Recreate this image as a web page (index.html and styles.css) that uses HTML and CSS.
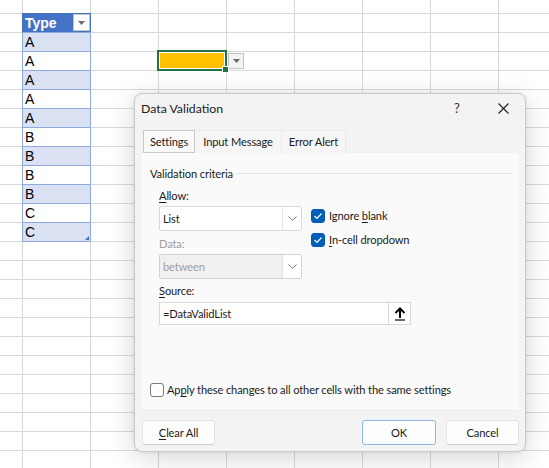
FILE: index.html
```html
<!DOCTYPE html>
<html>
<head>
<meta charset="utf-8">
<link rel="stylesheet" href="styles.css">
</head>
<body>
<div class="sheet">
  <div class="tcell thead" style="grid-row:2">Type<span class="fbtn"><svg width="7" height="4" viewBox="0 0 7 4"><path d="M0 0H7L3.5 4Z" fill="#6b6b6b"/></svg></span></div>
  <div class="tcell band" style="grid-row:3">A</div>
  <div class="tcell" style="grid-row:4">A</div>
  <div class="tcell band" style="grid-row:5">A</div>
  <div class="tcell" style="grid-row:6">A</div>
  <div class="tcell band" style="grid-row:7">A</div>
  <div class="tcell" style="grid-row:8">B</div>
  <div class="tcell band" style="grid-row:9">B</div>
  <div class="tcell" style="grid-row:10">B</div>
  <div class="tcell band" style="grid-row:11">B</div>
  <div class="tcell" style="grid-row:12">C</div>
  <div class="tcell band last" style="grid-row:13">C<span class="resize"></span></div>

  <div class="selcell"><span class="handle"></span></div>
  <div class="cellbtn"><svg width="7" height="4" viewBox="0 0 7 4"><path d="M0 0H7L3.5 4Z" fill="#6b6b6b"/></svg></div>
</div>

<div class="dialog">
  <div class="titlebar">
    <span class="title">Data Validation</span>
    <span class="help">?</span>
    <span class="close"><svg width="11" height="11" viewBox="0 0 11 11"><path d="M0.5 0.5L10.5 10.5M10.5 0.5L0.5 10.5" stroke="#1f1f1f" stroke-width="1.1"/></svg></span>
  </div>
  <div class="tabs">
    <div class="tab active">Settings</div>
    <div class="tab">Input Message</div>
    <div class="tab">Error Alert</div>
  </div>
  <div class="panel">
    <div class="group">
      <span>Validation criteria</span><span class="gline"></span>
    </div>
    <div class="criteria">
      <div class="lbl"><u>A</u>llow:</div>
      <div class="combo"><span class="ctext">List</span><span class="chev"><svg width="9" height="5" viewBox="0 0 9 5"><path d="M0.5 0.5L4.5 4.5L8.5 0.5" fill="none" stroke="#777" stroke-width="1"/></svg></span></div>
      <div class="checks">
        <div class="chk"><span class="box on"><svg width="10" height="8" viewBox="0 0 10 8"><path d="M1.5 4L4 6.5L8.5 1.5" fill="none" stroke="#fff" stroke-width="1.2"/></svg></span><span>Ignore <u>b</u>lank</span></div>
        <div class="chk"><span class="box on"><svg width="10" height="8" viewBox="0 0 10 8"><path d="M1.5 4L4 6.5L8.5 1.5" fill="none" stroke="#fff" stroke-width="1.2"/></svg></span><span><u>I</u>n-cell dropdown</span></div>
      </div>
      <div class="lbl dis lbl-data"><span>Data:</span></div>
      <div class="combo disabled"><span class="ctext">between</span><span class="chev"><svg width="9" height="5" viewBox="0 0 9 5"><path d="M0.5 0.5L4.5 4.5L8.5 0.5" fill="none" stroke="#777" stroke-width="1"/></svg></span></div>
      <div class="lbl wide lbl-src"><u>S</u>ource:</div>
      <div class="source wide"><span class="ctext">=DataValidList</span><span class="upbtn"><svg width="12" height="14" viewBox="0 0 12 14"><path d="M6 1.5V11" stroke="#000" stroke-width="2"/><path d="M1.5 6L6 1.5L10.5 6" fill="none" stroke="#000" stroke-width="2"/><path d="M1 13H11" stroke="#000" stroke-width="1.2"/></svg></span></div>
    </div>
    <div class="apply"><span class="box"></span><span>Ap<u>p</u>ly these changes to all other cells with the same settings</span></div>
  </div>
  <div class="buttons">
    <div class="btn"><u>C</u>lear All</div>
    <div class="spacer"></div>
    <div class="btn primary">OK</div>
    <div class="btn">Cancel</div>
  </div>
</div>
</body>
</html>
```

FILE: styles.css
```css
html, body {
  margin: 0;
  padding: 0;
  width: 549px;
  height: 468px;
  overflow: hidden;
  background: #fff;
}

body {
  position: relative;
  font-family: "Lato", "Noto Sans", sans-serif;
}

.sheet {
  width: 549px;
  height: 468px;
  display: grid;
  grid-template-columns: 22px repeat(8, 68px);
  grid-template-rows: 13px repeat(24, 19px);
  background-color: #fff;
  background-image:
    linear-gradient(to right, #d9d9d9 1px, transparent 1px),
    linear-gradient(to bottom, #d9d9d9 1px, transparent 1px);
  background-size: 68px 100%, 100% 19px;
  background-position: 22px 0, 0 13px;
  font-family: "Liberation Sans", Arial, sans-serif;
  font-size: 14px;
  color: #000;
}

.tcell {
  grid-column: 2;
  position: relative;
  box-sizing: border-box;
  width: 69px;
  height: 20px;
  border: 1px solid #8ea9db;
  border-bottom: none;
  background: #fff;
  padding-left: 2px;
  line-height: 19px;
}

.tcell.band { background: #d9e1f2; }
.tcell.last { border-bottom: 1px solid #8ea9db; }

.thead {
  background: #4472c4;
  border-color: #4472c4;
  color: #fff;
  font-weight: bold;
}

.fbtn {
  position: absolute;
  right: 0;
  top: 0;
  width: 17px;
  height: 17px;
  box-sizing: border-box;
  background: #fff;
  border: 1px solid #c6c6c6;
  display: flex;
  align-items: center;
  justify-content: center;
}

.resize {
  position: absolute;
  right: 1px;
  bottom: 1px;
  width: 0;
  height: 0;
  border-left: 4px solid transparent;
  border-bottom: 4px solid #4472c4;
}

.selcell {
  grid-column: 4;
  grid-row: 4;
  position: relative;
  margin: -1px -1px -1px -1px;
  border: 2px solid #217346;
  background: #ffc000;
  box-shadow: inset 0 0 0 1px #fff;
}

.handle {
  position: absolute;
  right: -4px;
  bottom: -4px;
  width: 5px;
  height: 5px;
  background: #217346;
  border: 1px solid #fff;
}

.cellbtn {
  grid-column: 5;
  grid-row: 4;
  justify-self: start;
  align-self: start;
  margin-top: 2px;
  margin-left: 2px;
  width: 16px;
  height: 16px;
  box-sizing: border-box;
  background: #f3f3f3;
  border: 1px solid #c3c3c3;
  display: flex;
  align-items: center;
  justify-content: center;
}

/* Dialog */
.dialog {
  position: absolute;
  left: 134px;
  top: 93px;
  width: 392px;
  height: 359px;
  box-sizing: border-box;
  border: 1px solid #c9c9c9;
  border-radius: 8px;
  background: #f3f3f3;
  box-shadow: 0 6px 28px rgba(0, 0, 0, 0.16), 0 0 4px rgba(0, 0, 0, 0.08);
  padding: 0 6px 0 7px;
  display: flex;
  flex-direction: column;
  font-size: 11.1px;
  letter-spacing: -0.12px;
  color: #1b1b1b;
}

.titlebar {
  height: 28px;
  display: flex;
  align-items: center;
  margin-left: -1px;
  letter-spacing: 0;
}

.title {
  flex: 1;
  font-size: 12.3px;
}

.help {
  width: 20px;
  text-align: center;
  font-size: 13px;
  margin-right: 26px;
  color: #333;
}

.close {
  width: 20px;
  display: flex;
  justify-content: center;
  margin-right: 6px;
}

.tabs {
  display: flex;
  margin-top: 8px;
  margin-left: 1px;
  height: 23px;
}

.tab {
  box-sizing: border-box;
  height: 23px;
  line-height: 21px;
  text-align: center;
  background: #f6f6f6;
  border: 1px solid #ebebeb;
  border-left: none;
  border-bottom: none;
}

.tab.active {
  width: 52px;
  background: #fafafa;
  border: 1px solid #c9c9c9;
}

.tab:nth-child(2) { width: 87px; }
.tab:nth-child(3) { width: 64px; }

.panel {
  height: 256px;
  background: #fafafa;
  display: flex;
  flex-direction: column;
  padding: 0 7px 0 8px;
}

.group {
  display: flex;
  align-items: center;
  margin-top: 12px;
  height: 16px;
}

.gline {
  flex: 1;
  height: 1px;
  background: #e3e3e3;
  margin-left: 4px;
}

.criteria {
  display: grid;
  grid-template-columns: 143px 1fr;
  column-gap: 9px;
  margin-left: 9px;
  margin-top: 5px;
}

.lbl {
  height: 20px;
  line-height: 20px;
}

.lbl.dis { color: #9d9d9d; }
.lbl-data { margin-top: 3px; }
.lbl-src { margin-top: 2px; }

.wide { grid-column: 1 / span 2; }

.combo {
  grid-column: 1;
  box-sizing: border-box;
  height: 25px;
  background: #fff;
  border: 1px solid #d9d9d9;
  border-radius: 2px;
  display: flex;
  align-items: center;
}

.ctext {
  flex: 1;
  padding-left: 3px;
}

.chev {
  width: 18px;
  height: 23px;
  border-left: 1px solid #e3e3e3;
  display: flex;
  align-items: center;
  justify-content: center;
  background: #fff;
}

.combo.disabled {
  background: #f0f0f0;
  color: #a0a0a0;
  border-color: #d3d3d3;
}

.checks {
  grid-column: 2;
  grid-row: 2 / span 3;
  padding-top: 3px;
}

.chk {
  height: 24px;
  display: flex;
  align-items: flex-start;
  line-height: 14px;
}

.box {
  box-sizing: border-box;
  width: 14px;
  height: 14px;
  border: 1px solid #7a7a7a;
  border-radius: 3px;
  background: #fff;
  margin-right: 4px;
  display: flex;
  align-items: center;
  justify-content: center;
  flex: none;
}

.box.on {
  background: #005fb8;
  border-color: #005fb8;
}

.source {
  box-sizing: border-box;
  width: 252px;
  height: 23px;
  margin-top: 1px;
  background: #fff;
  border: 1px solid #d9d9d9;
  display: flex;
  align-items: center;
}

.upbtn {
  width: 21px;
  height: 21px;
  border-left: 1px solid #d9d9d9;
  display: flex;
  align-items: center;
  justify-content: center;
}

.apply {
  margin-top: auto;
  margin-bottom: 12px;
  height: 14px;
  line-height: 14px;
  display: flex;
  align-items: center;
}

.apply .box { margin-right: 3px; }

.buttons {
  display: flex;
  margin-top: 11px;
  height: 25px;
}

.spacer { flex: 1; }

.btn {
  box-sizing: border-box;
  width: 73px;
  height: 25px;
  line-height: 23px;
  text-align: center;
  background: #fdfdfd;
  border: 1px solid #e3e3e3;
  border-bottom-color: #cfcfcf;
  border-radius: 3px;
}

.btn.primary {
  width: 74px;
  margin-right: 10px;
  border-color: #8ab8e6;
}

u { text-decoration: underline; text-underline-offset: 2px; }
```
